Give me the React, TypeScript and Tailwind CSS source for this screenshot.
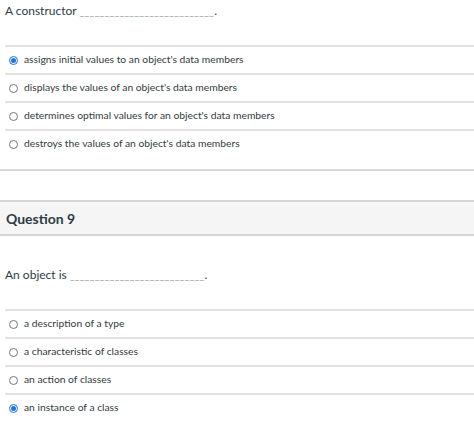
const font = { fontFamily: 'Lato, "Liberation Sans", sans-serif' };

function Radio({ checked }: { checked?: boolean }) {
  if (checked) {
    return (
      <span className="flex h-[9px] w-[9px] items-center justify-center rounded-full border border-[#1a73e8] bg-white">
        <span className="h-[5px] w-[5px] rounded-full bg-[#1a73e8]" />
      </span>
    );
  }
  return <span className="h-[9px] w-[9px] rounded-full border border-[#767676] bg-white" />;
}

function Option({ text, checked }: { text: string; checked?: boolean }) {
  return (
    <div className="flex h-[28px] items-center border-t-2 border-[#e3e3e3] pl-[4px]">
      <Radio checked={checked} />
      <span className="ml-[6px] text-[10.3px] text-[#333b40]">{text}</span>
    </div>
  );
}

export default function App() {
  const blank = '___________________________';
  return (
    <div className="h-[426px] w-[474px] overflow-hidden bg-white" style={font}>
      <div className="border-b-2 border-[#d9d9d9] pb-[12px]">
        <div className="h-[45px] pl-[5px] pt-[2px] text-[12px] text-[#2d3b45]">
          A constructor <span className="text-[10px] tracking-[0.4px] text-[#8a949a]">{blank}</span>.
        </div>
        <div className="ml-[5px]">
          <Option text="assigns initial values to an object's data members" checked />
          <Option text="displays the values of an object's data members" />
          <Option text="determines optimal values for an object's data members" />
          <Option text="destroys the values of an object's data members" />
        </div>
      </div>

      <div className="h-[29px]" />

      <div className="flex h-[36px] items-center border-y-2 border-[#d6d6d6] bg-[#f5f5f5] pl-[6px]">
        <span className="text-[14px] font-bold text-[#2d3b45]">Question 9</span>
      </div>

      <div className="h-[73px] pl-[5px] pt-[30px] text-[12px] text-[#2d3b45]">
        An object is <span className="text-[10px] tracking-[0.4px] text-[#8a949a]">{blank}</span>.
      </div>
      <div className="ml-[5px]">
        <Option text="a description of a type" />
        <Option text="a characteristic of classes" />
        <Option text="an action of classes" />
        <Option text="an instance of a class" checked />
      </div>
    </div>
  );
}
